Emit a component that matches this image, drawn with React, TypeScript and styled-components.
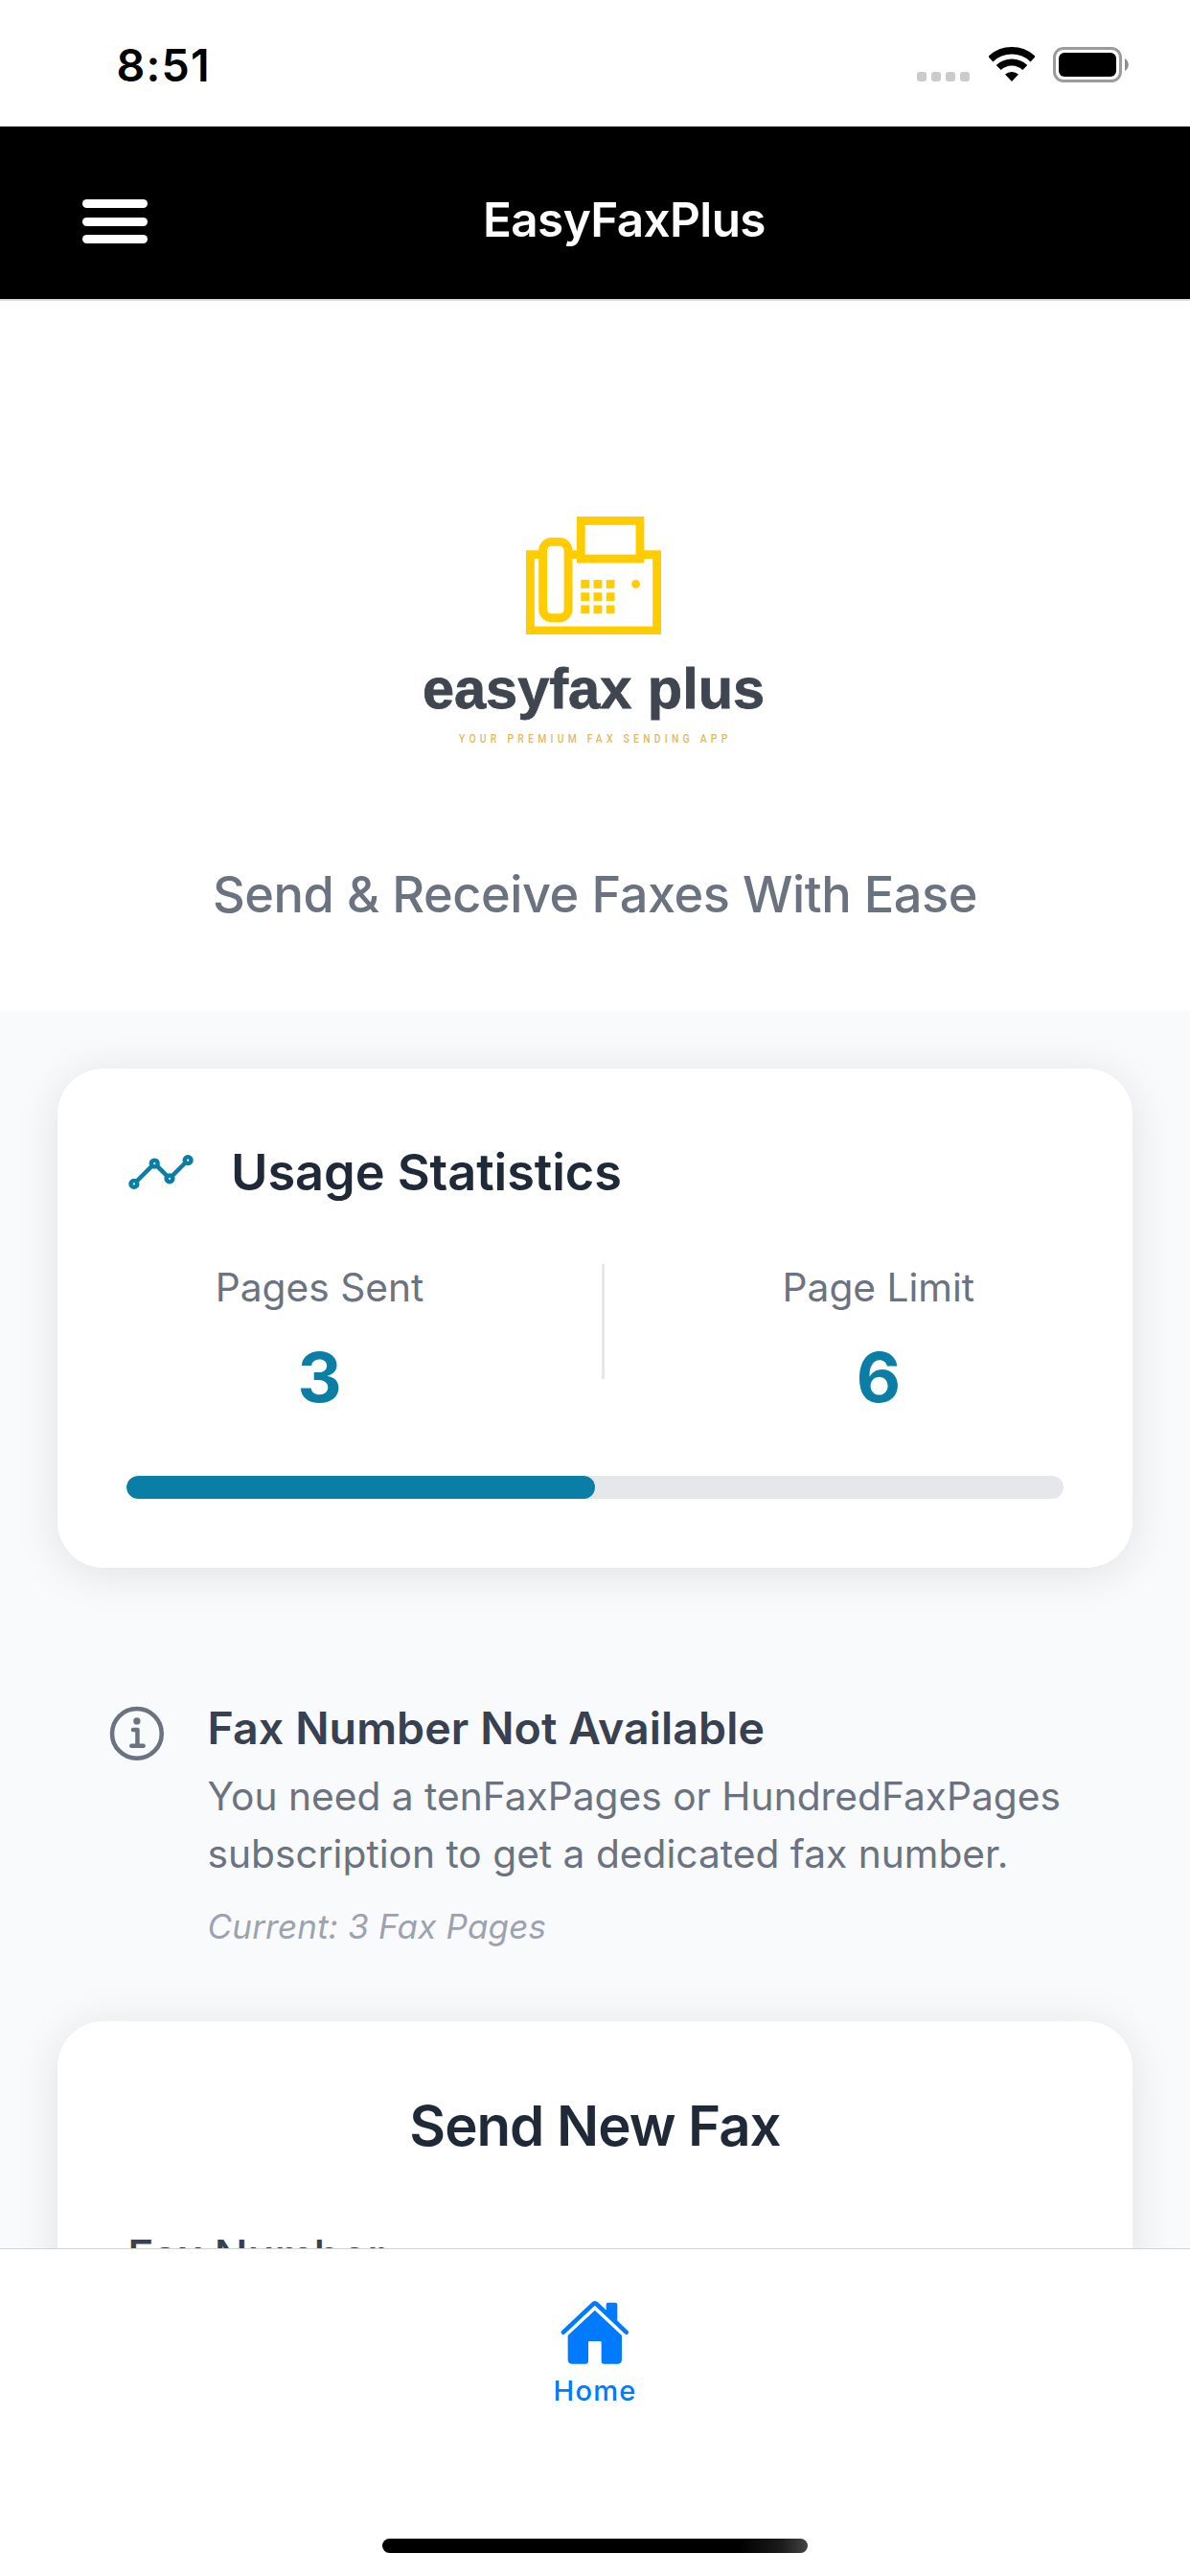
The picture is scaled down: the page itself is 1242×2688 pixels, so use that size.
import React from 'react';
import styled, { createGlobalStyle } from 'styled-components';
import { IoAnalyticsOutline, IoInformationCircleOutline } from 'react-icons/io5';

const GlobalStyle = createGlobalStyle`
  * { box-sizing: border-box; }
  body { margin: 0; background: #fff; }
`;

const Screen = styled.div`
  width: 1242px;
  height: 2688px;
  display: flex;
  flex-direction: column;
  overflow: hidden;
  background: #fff;
  font-family: Inter, "Liberation Sans", sans-serif;
`;

/* Status bar */
const StatusBar = styled.div`
  flex: none;
  height: 132px;
  padding: 3px 64px 0 121.5px;
  display: flex;
  align-items: center;
  justify-content: space-between;
`;

const Clock = styled.span`
  font-size: 46.5px;
  font-weight: 600;
  line-height: 56px;
  letter-spacing: 1.19px;
  color: #000;
`;

const StatusIcons = styled.div`
  display: flex;
  align-items: flex-end;
  gap: 19.5px;

  svg { display: block; }
`;

const SignalDots = styled.div`
  display: flex;
  gap: 5px;
  padding-bottom: 1px;
`;

const SignalDot = styled.span`
  width: 10px;
  height: 10px;
  border-radius: 3px;
  background: #cbcbcb;
`;

const WifiWrap = styled.div`
  padding-bottom: 1px;
`;

/* App header */
const Header = styled.header`
  flex: none;
  height: 180px;
  padding: 14px 0 0 86px;
  display: grid;
  grid-template-columns: 418px 1fr;
  align-items: center;
  background: #000;
`;

const MenuButton = styled.button`
  width: 68px;
  padding: 4px 0 0;
  border: 0;
  background: none;
  display: flex;
  flex-direction: column;
  gap: 9.5px;
`;

const MenuLine = styled.span`
  width: 68px;
  height: 9px;
  border-radius: 4.5px;
  background: #fff;
`;

const HeaderTitle = styled.h1`
  margin: 0;
  font-size: 49.5px;
  font-weight: 600;
  line-height: 60px;
  letter-spacing: -0.65px;
  color: #fff;
`;

/* Scrolling content */
const Content = styled.main`
  flex: 1;
  min-height: 0;
  overflow: hidden;
  display: flex;
  flex-direction: column;
  background: #f9fafc;
`;

const Hero = styled.section`
  flex: none;
  height: 743px;
  padding-top: 224.7px;
  border-top: 2px solid #dcdcdc;
  display: flex;
  flex-direction: column;
  align-items: center;
  background: #fff;
`;

const Logo = styled.div`
  padding-right: 3px;
  display: flex;
  flex-direction: column;
  align-items: center;

  svg { display: block; }
`;

const LogoName = styled.div`
  margin-top: 27.2px;
  font-family: "Liberation Sans", Arial, sans-serif;
  font-size: 59.5px;
  font-weight: 700;
  line-height: 60px;
  color: #404650;
  -webkit-text-stroke: 0.8px #404650;
`;

const LogoTagline = styled.div`
  margin-top: 13.3px;
  padding-left: 5.3px;
  font-family: Roboto, sans-serif;
  font-size: 12.6px;
  font-weight: 500;
  line-height: 16px;
  letter-spacing: 5.2px;
  white-space: nowrap;
  color: #dfb967;
  transform: scaleX(0.82);
`;

const Slogan = styled.p`
  margin: 122.3px 0 0;
  font-size: 52.3px;
  font-weight: 500;
  line-height: 64px;
  letter-spacing: -0.44px;
  color: #6b7280;
`;

const Sections = styled.div`
  padding: 60px 60px 0;
`;

const Card = styled.section<{ $minHeight?: number }>`
  min-height: ${(p) => p.$minHeight ?? 0}px;
  padding: 72px;
  border-radius: 48px;
  background: #fff;
  box-shadow: 0 6px 48px rgba(0, 0, 0, 0.1);
`;

const CardHeader = styled.div`
  height: 72px;
  display: flex;
  align-items: center;
  gap: 37px;

  svg { color: #0a7ea4; }
`;

const CardTitle = styled.h2`
  margin: 0;
  font-size: 52.3px;
  font-weight: 600;
  line-height: 64px;
  letter-spacing: -0.07px;
  color: #1f2937;
`;

const Stats = styled.div`
  margin-top: 60px;
  display: flex;
  justify-content: space-around;
  align-items: flex-start;
`;

const Stat = styled.div`
  display: flex;
  flex-direction: column;
  align-items: center;
  gap: 25px;
`;

const StatLabel = styled.span`
  font-size: 40.7px;
  line-height: 50px;
  color: #6b7280;
`;

const StatValue = styled.span`
  font-size: 71.5px;
  font-weight: 700;
  line-height: 86px;
  color: #0a7ea4;
`;

const StatDivider = styled.div`
  width: 3px;
  height: 120px;
  background: #e5e7eb;
`;

const ProgressTrack = styled.div`
  margin-top: 60px;
  height: 24px;
  border-radius: 12px;
  overflow: hidden;
  background: #e5e7eb;
`;

const ProgressFill = styled.div`
  height: 100%;
  border-radius: 12px;
  background: #0a7ea4;
`;

const Notice = styled.section`
  margin: 137px 48px 77px;
  display: flex;
  align-items: flex-start;
  gap: 36.5px;

  > svg { flex: none; margin-top: 1px; color: #6b7280; }
`;

const NoticeText = styled.div`
  flex: 1;
  padding-top: 1px;
`;

const NoticeTitle = styled.h3`
  margin: 0;
  font-size: 46.5px;
  font-weight: 600;
  line-height: 58px;
  letter-spacing: 0.09px;
  color: #374151;
`;

const NoticeBody = styled.p`
  margin: 13px 0 0;
  font-size: 40.7px;
  line-height: 60px;
  color: #6b7280;
`;

const NoticeMeta = styled.p`
  margin: 23px 0 0;
  font-size: 35px;
  font-style: italic;
  line-height: 44px;
  letter-spacing: 0.2px;
  color: #9ca3af;
`;

const FormTitle = styled.h2`
  margin: 1px 0 71px;
  font-size: 58.2px;
  font-weight: 600;
  line-height: 72px;
  letter-spacing: -1.03px;
  text-align: center;
  color: #1f2937;
`;

const FieldLabel = styled.label`
  display: block;
  padding-left: 1px;
  font-size: 46.5px;
  font-weight: 500;
  line-height: 58px;
  letter-spacing: -0.14px;
  color: #374151;
`;

/* Bottom tab bar */
const TabBar = styled.nav`
  flex: none;
  height: 342px;
  padding: 53px 0 24px;
  border-top: 1px solid #d3d4d6;
  display: flex;
  flex-direction: column;
  align-items: center;
  justify-content: space-between;
  background: #fff;
`;

const Tab = styled.a`
  display: flex;
  flex-direction: column;
  align-items: center;
  gap: 9.4px;
  color: #007aff;

  svg { display: block; }
`;

const TabLabel = styled.span`
  font-size: 29.1px;
  font-weight: 500;
  line-height: 36px;
  letter-spacing: 1.2px;
`;

const HomeIndicator = styled.div`
  width: 444px;
  height: 15px;
  border-radius: 7.5px;
  background: linear-gradient(90deg, #000 84%, #1c1c1c 94%, #444 100%);
`;

const WifiIcon = () => (
  <svg width="48" height="36" viewBox="-24 -36 48 36" fill="none" stroke="#000">
    <path d="M-22.2 -23.3A32.2 32.2 0 0 1 22.2 -23.3" strokeWidth="7.6" />
    <path d="M-13.8 -14.5A20 20 0 0 1 13.8 -14.5" strokeWidth="7.2" />
    <path d="M0 0L-7 -7.4A10.6 10.6 0 0 1 7 -7.4Z" fill="#000" stroke="none" />
  </svg>
);

const BatteryIcon = () => (
  <svg width="79" height="37" viewBox="0 0 79 37">
    <rect x="1.5" y="1.5" width="69" height="34" rx="9.5" fill="none" stroke="#9b9b9b" strokeWidth="3" />
    <rect x="6" y="6" width="60" height="25" rx="6" fill="#000" />
    <path d="M75 12C80 15 80 22 75 25Z" fill="#8e8e8e" />
  </svg>
);

const keypad = [15, 18, 21].flatMap((y) => [13, 16, 19].map((x) => ({ x, y })));

const FaxLogo = () => (
  <svg width="141" height="123.4" viewBox="0 0 32 28" fill="none" stroke="#ffcc00" strokeWidth="2">
    <rect x="1" y="9" width="30" height="18" />
    <rect x="13" y="1" width="14" height="9" fill="#fff" />
    <rect x="4" y="6" width="6" height="18" rx="2" fill="#fff" />
    <g fill="#ffcc00" stroke="none">
      {keypad.map(({ x, y }) => (
        <rect key={`${x}-${y}`} x={x} y={y} width="2" height="2" />
      ))}
      <circle cx="26" cy="16" r="1" />
    </g>
  </svg>
);

const HouseIcon = () => (
  <svg width="71.67" height="67.67" viewBox="617 180 215 203" fill="currentColor">
    <path
      d="M626 281L719 193Q724.5 188 730 193L823 281"
      fill="none"
      stroke="currentColor"
      strokeWidth="14"
      strokeLinecap="round"
      strokeLinejoin="round"
    />
    <path d="M760 216V194Q760 188 766 188H788Q795 188 795 195V250Z" />
    <path d="M724.5 212L809 291V366Q809 380 795 380H752Q745 380 745 373V313Q745 309 741 309H708Q704 309 704 313V373Q704 380 697 380H654Q640 380 640 366V291Z" />
  </svg>
);

const usage = { sent: 3, limit: 6 };

export default function App() {
  return (
    <Screen>
      <GlobalStyle />
      <StatusBar>
        <Clock>8:51</Clock>
        <StatusIcons>
          <SignalDots>
            {[0, 1, 2, 3].map((i) => (
              <SignalDot key={i} />
            ))}
          </SignalDots>
          <WifiWrap>
            <WifiIcon />
          </WifiWrap>
          <BatteryIcon />
        </StatusIcons>
      </StatusBar>

      <Header>
        <MenuButton aria-label="Menu">
          <MenuLine />
          <MenuLine />
          <MenuLine />
        </MenuButton>
        <HeaderTitle>EasyFaxPlus</HeaderTitle>
      </Header>

      <Content>
        <Hero>
          <Logo>
            <FaxLogo />
            <LogoName>easyfax plus</LogoName>
            <LogoTagline>YOUR PREMIUM FAX SENDING APP</LogoTagline>
          </Logo>
          <Slogan>Send &amp; Receive Faxes With Ease</Slogan>
        </Hero>

        <Sections>
          <Card>
            <CardHeader>
              <IoAnalyticsOutline size={72} />
              <CardTitle>Usage Statistics</CardTitle>
            </CardHeader>
            <Stats>
              <Stat>
                <StatLabel>Pages Sent</StatLabel>
                <StatValue>{usage.sent}</StatValue>
              </Stat>
              <StatDivider />
              <Stat>
                <StatLabel>Page Limit</StatLabel>
                <StatValue>{usage.limit}</StatValue>
              </Stat>
            </Stats>
            <ProgressTrack>
              <ProgressFill style={{ width: `${(usage.sent / usage.limit) * 100}%` }} />
            </ProgressTrack>
          </Card>

          <Notice>
            <IoInformationCircleOutline size={72} />
            <NoticeText>
              <NoticeTitle>Fax Number Not Available</NoticeTitle>
              <NoticeBody>
                You need a tenFaxPages or HundredFaxPages subscription to get a dedicated fax number.
              </NoticeBody>
              <NoticeMeta>Current: 3 Fax Pages</NoticeMeta>
            </NoticeText>
          </Notice>

          <Card $minHeight={600}>
            <FormTitle>Send New Fax</FormTitle>
            <FieldLabel>Fax Number</FieldLabel>
          </Card>
        </Sections>
      </Content>

      <TabBar>
        <Tab>
          <HouseIcon />
          <TabLabel>Home</TabLabel>
        </Tab>
        <HomeIndicator />
      </TabBar>
    </Screen>
  );
}
